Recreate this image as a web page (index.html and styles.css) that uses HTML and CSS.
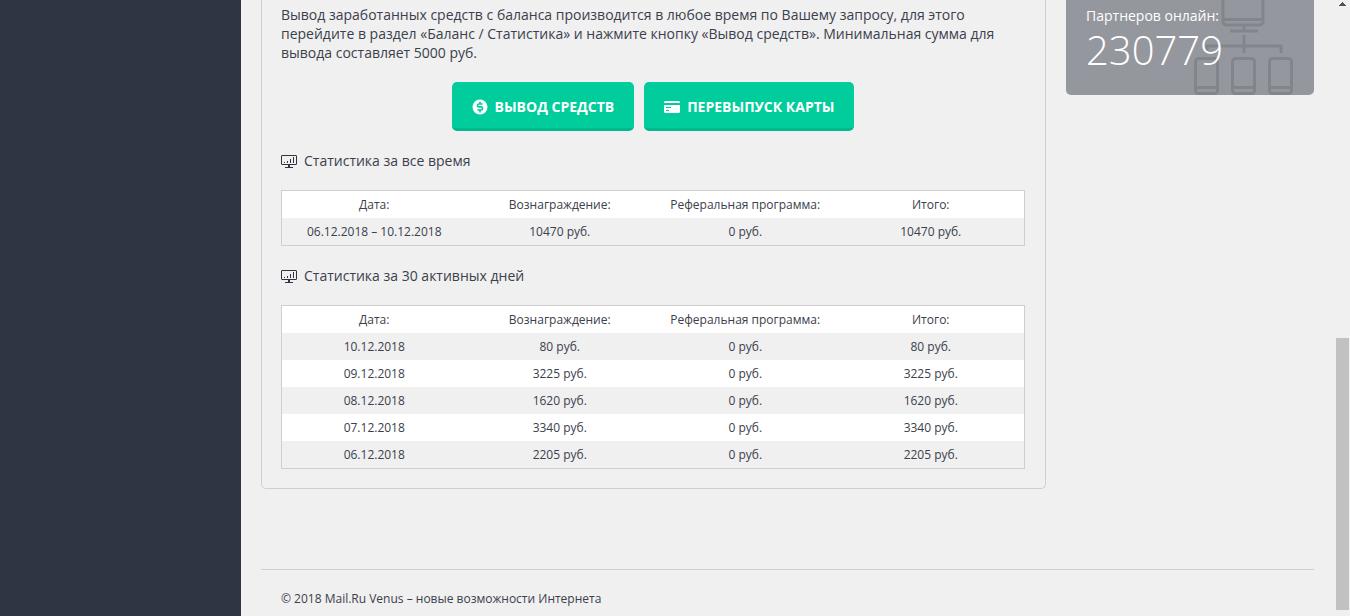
FILE: index.html
```html
<!DOCTYPE html>
<html lang="ru">
<head>
<meta charset="utf-8">
<title>Mail.Ru Venus</title>
<link rel="stylesheet" href="styles.css">
</head>
<body>
<svg class="sprite" aria-hidden="true">
  <symbol id="stats" viewBox="0 0 16 14">
    <rect x=".5" y="1.500" width="15" height="9" rx=".5" fill="none" stroke="currentColor"/>
    <path d="M3 8h1v1H3zM6 7h1v2H6zM9 5h1v4H9zM12 3h1v6h-1zM7 11h2v2H7zM4 13h8v1H4z" fill="currentColor"/>
  </symbol>
</svg>
<div class="layout">
  <aside class="sidebar"></aside>
  <div class="page">
    <div class="columns">
      <main class="panel">
        <p class="intro">Вывод заработанных средств с баланса производится в любое время по Вашему запросу, для этого перейдите в раздел «Баланс / Статистика» и нажмите кнопку «Вывод средств». Минимальная сумма для вывода составляет 5000 руб.</p>
        <div class="actions">
          <button class="btn" type="button">
            <svg class="btn-icon" viewBox="0 0 16 16" aria-hidden="true"><circle cx="8" cy="8" r="7.5" fill="#fff"/><path d="M10.600 5H7Q5.400 5 5.400 6.400T7 7.900H9Q10.600 7.900 10.600 9.400T9 11H5.400M8 2.700V5M8 11v2.400" fill="none" stroke="#00cd9b" stroke-width="1.600"/></svg>
            <span>Вывод средств</span>
          </button>
          <button class="btn" type="button">
            <svg class="btn-icon" viewBox="0 0 16 16" aria-hidden="true"><path d="M1.500 2h13Q16 2 16 3.500V4H0v-.5Q0 2 1.500 2zM0 6h16v6.500q0 1.500-1.500 1.500h-13Q0 14 0 12.500z" fill="#fff"/><path d="M2 8.500h5M2 11.500h3" stroke="#00cd9b"/></svg>
            <span>Перевыпуск карты</span>
          </button>
        </div>
        <h2 class="heading"><svg class="heading-icon" aria-hidden="true"><use href="#stats"/></svg>Статистика за все время</h2>
        <table class="stats">
          <thead><tr><th>Дата:</th><th>Вознаграждение:</th><th>Реферальная программа:</th><th>Итого:</th></tr></thead>
          <tbody><tr><td>06.12.2018 – 10.12.2018</td><td>10470 руб.</td><td>0 руб.</td><td>10470 руб.</td></tr></tbody>
        </table>
        <h2 class="heading"><svg class="heading-icon" aria-hidden="true"><use href="#stats"/></svg>Статистика за 30 активных дней</h2>
        <table class="stats">
          <thead><tr><th>Дата:</th><th>Вознаграждение:</th><th>Реферальная программа:</th><th>Итого:</th></tr></thead>
          <tbody>
            <tr><td>10.12.2018</td><td>80 руб.</td><td>0 руб.</td><td>80 руб.</td></tr>
            <tr><td>09.12.2018</td><td>3225 руб.</td><td>0 руб.</td><td>3225 руб.</td></tr>
            <tr><td>08.12.2018</td><td>1620 руб.</td><td>0 руб.</td><td>1620 руб.</td></tr>
            <tr><td>07.12.2018</td><td>3340 руб.</td><td>0 руб.</td><td>3340 руб.</td></tr>
            <tr><td>06.12.2018</td><td>2205 руб.</td><td>0 руб.</td><td>2205 руб.</td></tr>
          </tbody>
        </table>
      </main>
      <section class="online">
        <svg class="online-art" viewBox="0 0 102 95" aria-hidden="true">
          <g fill="none" stroke="#82858c" stroke-width="3">
            <path d="M31 0v21q0 4 4 4h32q4 0 4-4V0M31 19.500h40M38 31h28M52 26v5M52 35v18M15 53v-7h74v7"/>
            <rect x="3.500" y="58.500" width="22" height="35" rx="3"/><rect x="40.500" y="58.500" width="22" height="35" rx="3"/><rect x="77.500" y="58.500" width="22" height="35" rx="3"/>
            <path d="M3 87.500h23M40 87.500h23M77 87.500h23"/>
          </g>
        </svg>
        <div class="online-label">Партнеров онлайн:</div>
        <div class="online-count">230779</div>
      </section>
    </div>
    <footer class="footer">© 2018 Mail.Ru Venus – новые возможности Интернета</footer>
  </div>
  <div class="scroll-rail" aria-hidden="true">
    <svg class="scroll-arrow" viewBox="0 0 7 4"><path d="M3 0h1v1h1v1h1v1h1v1H0V3h1V2h1V1h1z" fill="#505050"/></svg>
    <div class="scroll-thumb"></div>
  </div>
</div>
</body>
</html>
```
FILE: styles.css
```css
* { box-sizing: border-box; }
body {
  margin: 0;
  background: #f0f0f0;
  color: #3b404c;
  font: 14px/19px "Open Sans", "Noto Sans", sans-serif;
}
.sprite { position: absolute; width: 0; height: 0; }
.layout { display: flex; min-height: 100vh; }
.sidebar { flex: 0 0 241px; background: #2f3542; }
.page { flex: 1; min-width: 0; padding: 0 22px 0 20px; }
.columns {
  display: grid;
  grid-template-columns: minmax(0, 1fr) 248px;
  gap: 20px;
  align-items: start;
}
.panel {
  padding: 5px 20px 19px 19px;
  border: 1px solid #cfcfcf;
  border-top: 0;
  border-radius: 0 0 5px 5px;
}
.intro { margin: 0 0 20px; }
.actions { display: flex; justify-content: center; gap: 10px; margin-bottom: 20px; }
.btn {
  display: flex;
  align-items: center;
  gap: 7px;
  height: 49px;
  padding: 3px 20px 0;
  border: 0;
  border-bottom: 3px solid #00b98c;
  border-radius: 5px;
  background: #00cd9b;
  color: #fff;
  font: 700 14px/19px "Open Sans", "Noto Sans", sans-serif;
  text-transform: uppercase;
}
.btn-icon { width: 16px; height: 16px; }
.heading {
  display: flex;
  align-items: center;
  gap: 7px;
  margin: 0 0 20px;
  font-size: 14px;
  font-weight: 400;
}
.heading-icon { width: 16px; height: 14px; color: #2f3542; }
.stats {
  width: 100%;
  table-layout: fixed;
  border: 1px solid #cfcfcf;
  border-spacing: 0;
  font-size: 12px;
  line-height: 17px;
  text-align: center;
}
.stats + .heading { margin-top: 20px; }
.stats th, .stats td { padding: 5px 1px 5px 0; font-weight: 400; }
.stats thead tr, .stats tbody tr:nth-child(even) { background: #fff; }
.online {
  position: relative;
  overflow: hidden;
  padding: 6px 20px 21px;
  border-radius: 0 0 5px 5px;
  background: #94979e;
  color: #fff;
}
.online-art { position: absolute; top: 0; right: 20px; width: 102px; height: 95px; }
.online-label, .online-count { position: relative; }
.online-count { font-size: 40px; font-weight: 300; line-height: 49px; }
.footer {
  margin-top: 80px;
  padding: 20px 20px 9px;
  border-top: 1px solid #cfcfcf;
  font-size: 12px;
  line-height: 17px;
}
.scroll-rail {
  display: flex;
  flex: 0 0 14px;
  flex-direction: column;
  align-items: flex-start;
  justify-content: space-between;
  padding: 2px 0 6px;
}
.scroll-arrow { width: 7px; height: 4px; margin-left: 3px; }
.scroll-thumb { width: 13px; height: 272px; background: #c1c1c1; }
```
